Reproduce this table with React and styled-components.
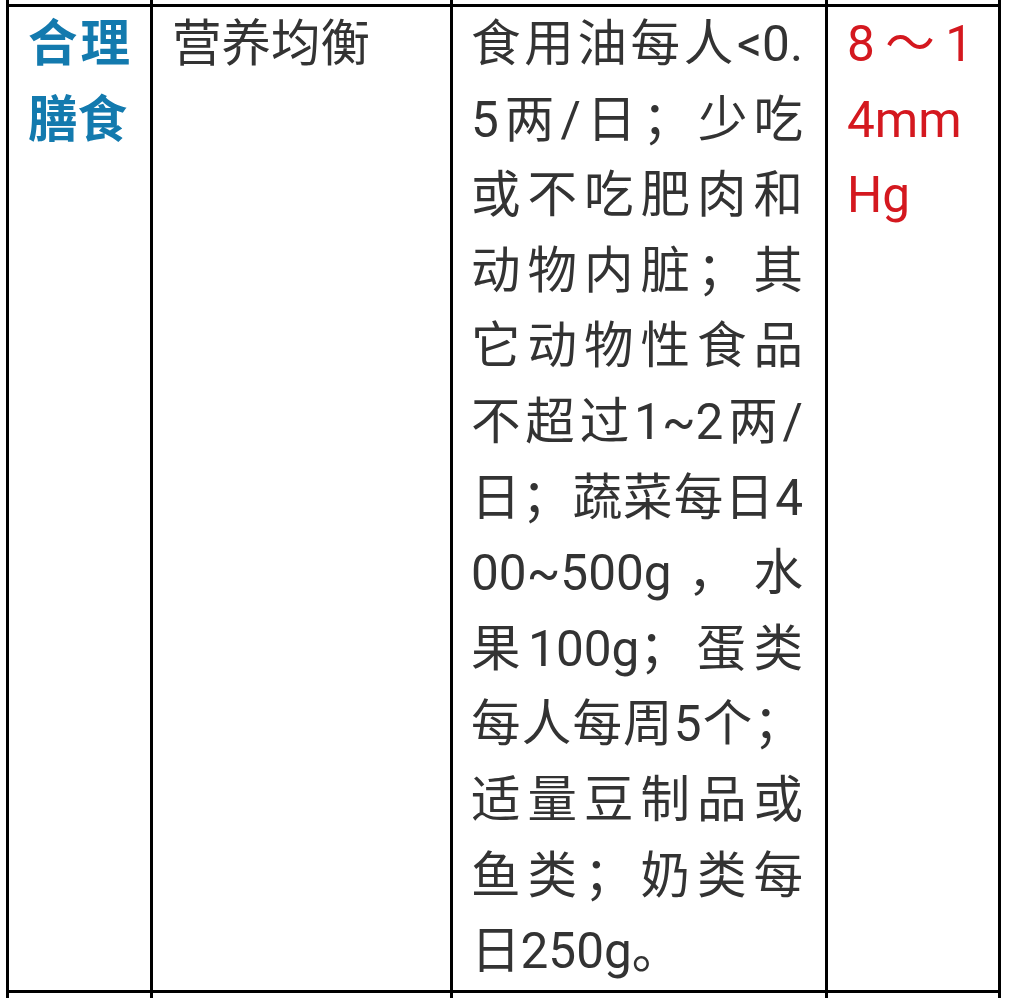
import React from "react";
import styled, { createGlobalStyle } from "styled-components";

const Global = createGlobalStyle`
  html, body {
    margin: 0;
    padding: 0;
    background: #ffffff;
  }
  body {
    overflow: hidden;
  }
`;

const Page = styled.div`
  width: 1011px;
  height: 998px;
  overflow: hidden;
  background: #ffffff;
`;

const Table = styled.div`
  display: grid;
  grid-template-columns: 141px 297px 372px 170px;
  grid-template-rows: 4px auto 60px;
  gap: 3px;
  padding: 0 3px;
  margin-left: 6px;
  width: max-content;
  background: #000000;
`;

const Stub = styled.div`
  background: #ffffff;
`;

const Cell = styled.div`
  background: #ffffff;
  font-family: Roboto, "Noto Sans CJK SC", sans-serif;
  font-size: 49.5px;
  line-height: 75.6px;
  color: #333333;
  word-break: break-all;
  text-align: justify;
  padding: 0 ${(p) => p.$right}px 0 ${(p) => p.$left}px;
`;

const TopicCell = styled(Cell)`
  color: #137aae;
  font-weight: 700;
`;

const EffectCell = styled(Cell)`
  color: #d4181f;
`;

const columns = [0, 1, 2, 3];

export default function App() {
  return (
    <Page>
      <Global />
      <Table>
        {columns.map((c) => (
          <Stub key={"prev" + c} />
        ))}
        <TopicCell $left={19} $right={20}>合理膳食</TopicCell>
        <Cell $left={19} $right={20}>营养均衡</Cell>
        <Cell $left={18} $right={22}>
          食用油每人&lt;0.5两/日；少吃或不吃肥肉和动物内脏；其它动物性食品不超过1~2两/日；蔬菜每日400~500g，水果100g；蛋类每人每周5个；适量豆制品或鱼类；奶类每日250g。
        </Cell>
        <EffectCell $left={19} $right={25}>8～14mmHg</EffectCell>
        {columns.map((c) => (
          <Stub key={"next" + c} />
        ))}
      </Table>
    </Page>
  );
}
